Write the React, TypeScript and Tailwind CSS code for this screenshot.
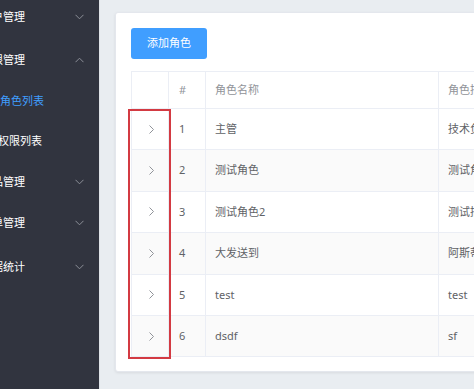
import React from "react";

const font = { fontFamily: '"Noto Sans", "Noto Sans CJK SC", sans-serif' };

type MenuItem = { label: string; offset: number; h: number; arrow?: "down" | "up"; active?: boolean };

const menu: MenuItem[] = [
  { label: "用户管理", offset: -19, h: 42, arrow: "down" },
  { label: "权限管理", offset: -19, h: 44, arrow: "up" },
  { label: "角色列表", offset: 0, h: 38, active: true },
  { label: "权限列表", offset: -2, h: 42 },
  { label: "商品管理", offset: -19, h: 40, arrow: "down" },
  { label: "订单管理", offset: -19, h: 42, arrow: "down" },
  { label: "数据统计", offset: -19, h: 46, arrow: "down" },
];

const rows = [
  { id: 1, name: "主管", desc: "技术负责人" },
  { id: 2, name: "测试角色", desc: "测试角色描述" },
  { id: 3, name: "测试角色2", desc: "测试描述12" },
  { id: 4, name: "大发送到", desc: "阿斯蒂芬" },
  { id: 5, name: "test", desc: "test" },
  { id: 6, name: "dsdf", desc: "sf" },
];

function Arrow({ dir }: { dir: "down" | "up" }) {
  return (
    <svg width="9" height="6" viewBox="0 0 9 6" className="shrink-0">
      <path
        d={dir === "down" ? "M0.5 0.8 L4.5 4.8 L8.5 0.8" : "M0.5 5.2 L4.5 1.2 L8.5 5.2"}
        fill="none"
        stroke="#8c8f98"
        strokeWidth="1"
      />
    </svg>
  );
}

function Chevron() {
  return (
    <svg width="5" height="9" viewBox="0 0 5 9">
      <path d="M0.5 0.5 L4.5 4.5 L0.5 8.5" fill="none" stroke="#909399" strokeWidth="1" />
    </svg>
  );
}

export default function App() {
  return (
    <div className="flex w-[474px] h-[389px] overflow-hidden" style={font}>
      {/* 侧边栏 */}
      <aside className="w-[100px] shrink-0 bg-[#31343f] border-r border-[#dfe3e8] overflow-hidden">
        <div className="-mt-[4px]">
          {menu.map((m) => (
            <div key={m.label} className="flex items-center pr-[15px]" style={{ height: m.h }}>
              <span
                className={`flex-1 whitespace-nowrap text-[11px] ${m.active ? "text-[#409eff]" : "text-white"}`}
                style={{ marginLeft: m.offset }}
              >
                {m.label}
              </span>
              {m.arrow && <Arrow dir={m.arrow} />}
            </div>
          ))}
        </div>
      </aside>

      {/* 메인 */}
      <main className="flex-1 bg-[#e9edf1] pl-[15px] pt-[12px]">
        <div className="w-[420px] h-[360px] bg-white border border-[#e4e7ed] rounded-[3px] shadow-[0_1px_3px_rgba(0,0,0,0.08)] pl-[15px] pt-[15px]">
          <button className="w-[76px] h-[31px] rounded-[3px] bg-[#409eff] text-white text-[11px]">
            添加角色
          </button>

          <div className="relative mt-[12px] border-l border-t border-[#ebeef5] text-[11px]">
            <div className="flex h-[37px] items-center border-b border-[#ebeef5] text-[#909399]">
              <div className="w-[37px] h-full border-r border-[#ebeef5]" />
              <div className="w-[37px] h-full border-r border-[#ebeef5] flex items-center pl-[10px]">#</div>
              <div className="w-[233px] h-full border-r border-[#ebeef5] flex items-center pl-[9px]">角色名称</div>
              <div className="flex-1 h-full flex items-center pl-[9px] whitespace-nowrap">角色描述</div>
            </div>
            {rows.map((r, i) => (
              <div
                key={r.id}
                className={`flex h-[41.4px] items-center border-b border-[#ebeef5] text-[#606266] ${i % 2 === 1 ? "bg-[#fafafa]" : "bg-white"}`}
              >
                <div className="w-[37px] h-full border-r border-[#ebeef5] flex items-center justify-center pl-[2px]">
                  <Chevron />
                </div>
                <div className="w-[37px] h-full border-r border-[#ebeef5] flex items-center pl-[10px]">{r.id}</div>
                <div className="w-[233px] h-full border-r border-[#ebeef5] flex items-center pl-[9px]">{r.name}</div>
                <div className="flex-1 h-full flex items-center pl-[9px] whitespace-nowrap">{r.desc}</div>
              </div>
            ))}

            {/* 빨간 표시 박스 */}
            <div className="absolute left-[-4px] top-[37px] w-[43px] h-[250px] border-2 border-[#d33a42]" />
          </div>
        </div>
      </main>
    </div>
  );
}
